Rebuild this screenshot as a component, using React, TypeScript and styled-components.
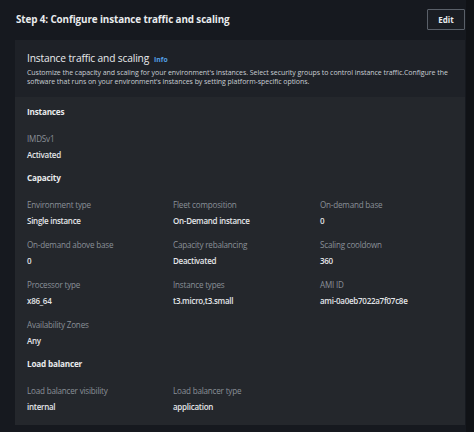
import React from "react";
import styled, { createGlobalStyle } from "styled-components";

const GlobalStyle = createGlobalStyle`
  html, body {
    margin: 0;
    padding: 0;
    background: #16191f;
  }
  body {
    font-family: "Open Sans", "Noto Sans", Arial, sans-serif;
    -webkit-font-smoothing: antialiased;
  }
  * { box-sizing: border-box; }
`;

const Page = styled.div`
  display: flex;
  min-height: 432px;
  background: #16191f;
`;

const Main = styled.main`
  flex: 1;
  padding: 0 1px 9px 15px;
  display: flex;
  flex-direction: column;
`;

const ScrollTrack = styled.div`
  width: 8px;
  background: #101216;
`;

const PageHeader = styled.header`
  height: 40px;
  padding: 0 0 2px 1px;
  display: flex;
  align-items: center;
  justify-content: space-between;
`;

const PageTitle = styled.h1`
  margin: 0;
  font-size: 9.9px;
  letter-spacing: -0.12px;
  line-height: 16px;
  font-weight: 700;
  color: #e9ebed;
`;

const EditButton = styled.button`
  height: 21px;
  width: 38px;
  padding: 0;
  border: 1px solid #5a6069;
  border-radius: 1px;
  background: #1a1d23;
  color: #e9ebed;
  font-family: inherit;
  font-size: 8px;
  font-weight: 700;
`;

const Panel = styled.section`
  display: flex;
  flex-direction: column;
`;

const PanelHeader = styled.div`
  background: #1e2127;
  padding: 10px 12px 11px 12px;
`;

const PanelTitleRow = styled.div`
  display: flex;
  align-items: baseline;
  gap: 5px;
  line-height: 16px;
`;

const PanelTitle = styled.h2`
  margin: 0;
  font-size: 10.2px;
  letter-spacing: -0.15px;
  font-weight: 400;
  color: #e9ebed;
`;

const InfoLink = styled.span`
  font-size: 6.8px;
  font-weight: 700;
  color: #539fe5;
`;

const Description = styled.p`
  margin: 0;
  font-size: 7px;
  letter-spacing: -0.05px;
  line-height: 9px;
  color: #c9ced4;
`;

const PanelBody = styled.div`
  background: #24272c;
  padding: 7px 12px 10px 12px;
  display: flex;
  flex-direction: column;
  gap: 7px;
`;

const Section = styled.div`
  display: flex;
  flex-direction: column;
  gap: 11px;
`;

const SectionHeading = styled.h3`
  margin: 0;
  font-size: 8.2px;
  letter-spacing: -0.2px;
  line-height: 16px;
  font-weight: 700;
  color: #e9ebed;
`;

const FieldGrid = styled.div`
  display: grid;
  grid-template-columns: 146px 147px 1fr;
  row-gap: 8px;
`;

const Field = styled.div`
  display: flex;
  flex-direction: column;
`;

const Label = styled.div`
  font-size: 8.1px;
  letter-spacing: -0.2px;
  line-height: 16px;
  color: #8a9098;
  white-space: nowrap;
`;

const Value = styled.div`
  font-size: 8px;
  letter-spacing: -0.27px;
  line-height: 16px;
  font-weight: 600;
  color: #e3e5e8;
  white-space: nowrap;
`;

type Item = { label: string; value: string };

const sections: { title: string; items: Item[] }[] = [
  {
    title: "Instances",
    items: [{ label: "IMDSv1", value: "Activated" }],
  },
  {
    title: "Capacity",
    items: [
      { label: "Environment type", value: "Single instance" },
      { label: "Fleet composition", value: "On-Demand instance" },
      { label: "On-demand base", value: "0" },
      { label: "On-demand above base", value: "0" },
      { label: "Capacity rebalancing", value: "Deactivated" },
      { label: "Scaling cooldown", value: "360" },
      { label: "Processor type", value: "x86_64" },
      { label: "Instance types", value: "t3.micro,t3.small" },
      { label: "AMI ID", value: "ami-0a0eb7022a7f07c8e" },
      { label: "Availability Zones", value: "Any" },
    ],
  },
  {
    title: "Load balancer",
    items: [
      { label: "Load balancer visibility", value: "internal" },
      { label: "Load balancer type", value: "application" },
    ],
  },
];

export default function App() {
  return (
    <>
      <GlobalStyle />
      <Page>
        <Main>
          <PageHeader>
            <PageTitle>Step 4: Configure instance traffic and scaling</PageTitle>
            <EditButton>Edit</EditButton>
          </PageHeader>
          <Panel>
            <PanelHeader>
              <PanelTitleRow>
                <PanelTitle>Instance traffic and scaling</PanelTitle>
                <InfoLink>Info</InfoLink>
              </PanelTitleRow>
              <Description>
                Customize the capacity and scaling for your environment's instances. Select security groups to control instance traffic.Configure the software that runs on your environment's instances by setting platform-specific options.
              </Description>
            </PanelHeader>
            <PanelBody>
              {sections.map((s) => (
                <Section key={s.title}>
                  <SectionHeading>{s.title}</SectionHeading>
                  <FieldGrid>
                    {s.items.map((it) => (
                      <Field key={it.label}>
                        <Label>{it.label}</Label>
                        <Value>{it.value}</Value>
                      </Field>
                    ))}
                  </FieldGrid>
                </Section>
              ))}
            </PanelBody>
          </Panel>
        </Main>
        <ScrollTrack />
      </Page>
    </>
  );
}
